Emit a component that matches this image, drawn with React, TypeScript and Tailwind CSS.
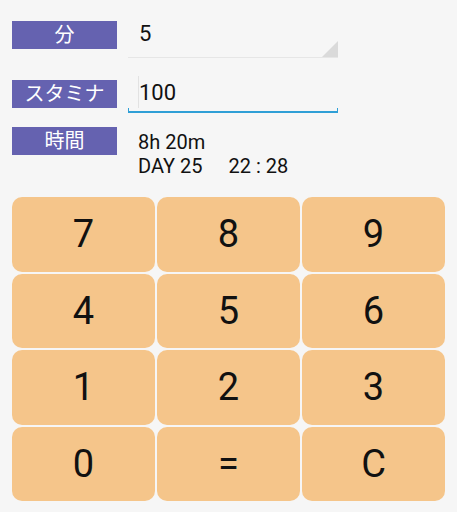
import React from 'react';

const keys = ['7', '8', '9', '4', '5', '6', '1', '2', '3', '0', '=', 'C'];

const Label: React.FC<{ text: string }> = ({ text }) => (
  <div className="w-[105px] h-[28px] shrink-0 bg-[#6562b0] text-white text-[20px] leading-[28px] text-center">
    {text}
  </div>
);

const App: React.FC = () => {
  return (
    <div
      className="w-[457px] h-[512px] bg-[#f6f6f6] px-[12px] pt-[21px] text-[#111]"
      style={{ fontFamily: "Roboto, 'Noto Sans CJK JP', sans-serif" }}
    >
      {/* 分 */}
      <div className="flex items-start">
        <Label text="分" />
        <div className="relative ml-[11px] w-[210px] h-[37px] border-b border-[#e6e6e6]">
          <div className="pl-[11px] text-[22px] leading-[26px]">5</div>
          <div className="absolute right-0 bottom-0 w-0 h-0 border-l-[16px] border-l-transparent border-b-[16px] border-b-[#dadada]" />
        </div>
      </div>

      {/* スタミナ */}
      <div className="flex items-start mt-[22px]">
        <Label text="スタミナ" />
        <div className="relative ml-[11px] w-[210px] flex flex-col">
          <div className="h-[28px] pl-[11px] text-[22px] leading-[26px]">100</div>
          <div className="h-[5px] border-x border-b-2 border-[#2f9fd6]" />
          <div className="absolute left-[10px] top-[-4px] w-px h-[32px] bg-[#e2e2e2]" />
        </div>
      </div>

      {/* 時間 */}
      <div className="flex items-start mt-[14px]">
        <Label text="時間" />
        <div className="ml-[21px] mt-[3px] text-[20px] leading-[24px]">
          <div>8h 20m</div>
          <div className="flex">
            <span>DAY 25</span>
            <span className="ml-[26px]">22 : 28</span>
          </div>
        </div>
      </div>

      <div className="grid grid-cols-3 gap-[2px] mt-[19px]">
        {keys.map((k) => (
          <button
            key={k}
            className="h-[74.5px] rounded-[10px] bg-[#f5c58a] text-[38px] leading-none text-[#111] flex items-center justify-center"
          >
            {k}
          </button>
        ))}
      </div>
    </div>
  );
};

export default App;
